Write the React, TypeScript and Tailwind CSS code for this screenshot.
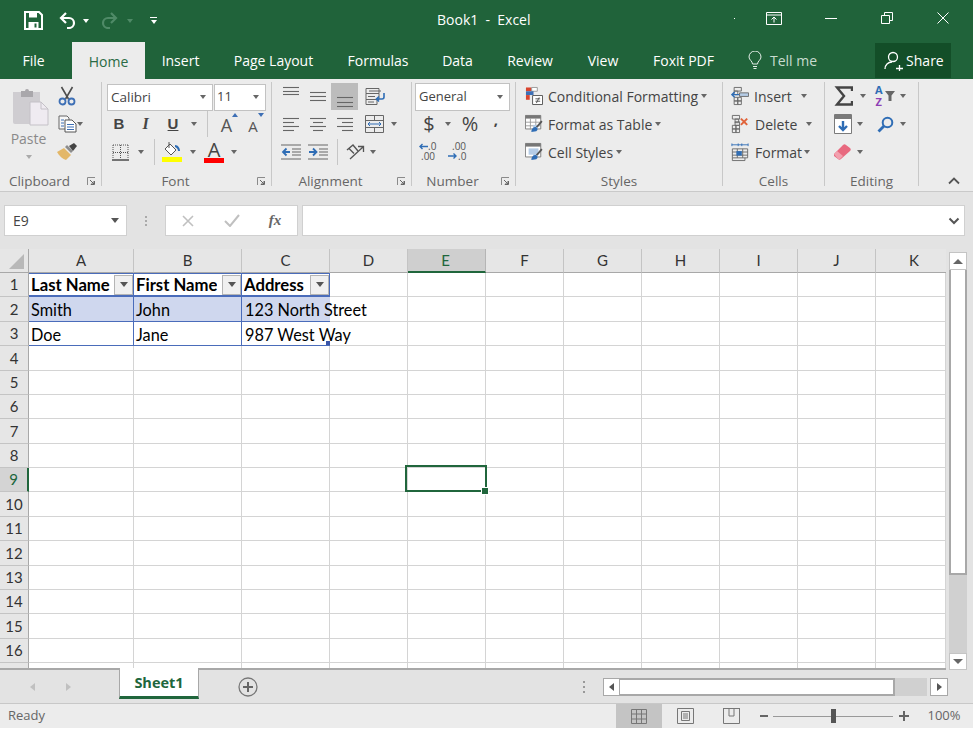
import * as React from 'react';

const COLUMNS = ['A', 'B', 'C', 'D', 'E', 'F', 'G', 'H', 'I', 'J', 'K'];
const ROWS = Array.from({ length: 16 }, (_, i) => i + 1);

const TABLE: Record<string, string> = {
  'A-2': 'Smith',
  'B-2': 'John',
  'C-2': '123 North Street',
  'A-3': 'Doe',
  'B-3': 'Jane',
  'C-3': '987 West Way',
};

const HEADERS = ['Last Name', 'First Name', 'Address'];

function Caret({ dark = false }: { dark?: boolean }) {
  return (
    <span
      className={
        dark
          ? 'inline-block h-0 w-0 border-x-[4px] border-t-[5px] border-x-transparent border-t-[#555555]'
          : 'inline-block h-0 w-0 border-x-[3px] border-t-[4px] border-x-transparent border-t-[#666666]'
      }
    />
  );
}

function Slot({ className, children }: { className: string; children?: React.ReactNode }) {
  return <div className={`flex h-full items-center justify-center ${className}`}>{children}</div>;
}

function VSep({ className }: { className: string }) {
  return (
    <Slot className={className}>
      <span className="h-[26px] w-px bg-[#c6c6c6]" />
    </Slot>
  );
}

function Launcher() {
  return (
    <svg width="9" height="9" viewBox="0 0 9 9" fill="none">
      <path d="M.5 8V.5H8" stroke="#8a8a8a" />
      <path d="M3 3l4 4M7.5 4v3.5H4z" stroke="#666666" />
    </svg>
  );
}

function Group({
  label,
  launcher,
  className,
  pad = '',
  children,
}: {
  label: string;
  launcher?: boolean;
  className: string;
  pad?: string;
  children: React.ReactNode;
}) {
  return (
    <section className={`flex h-full flex-col border-r border-[#c8c8c8] ${className}`}>
      <div className={`h-[84px] ${pad}`}>{children}</div>
      <div className="flex flex-1 items-center pt-[9px] text-[13.5px] leading-none text-[#666666]">
        <span className="flex-1 text-center">{label}</span>
        {launcher && (
          <span className="flex w-[22px] pl-[8px]">
            <Launcher />
          </span>
        )}
      </div>
    </section>
  );
}

function Row({ className = '', children }: { className?: string; children: React.ReactNode }) {
  return <div className={`flex h-[28px] items-center ${className}`}>{children}</div>;
}

function SaveIcon() {
  return (
    <svg width="19" height="19" viewBox="0 0 19 19" fill="none">
      <path d="M1 1h14l3 3v14H1z" stroke="#fff" strokeWidth="2" />
      <path d="M5 1.500h8v5H5z" fill="#fff" />
      <path d="M4.500 11h10v6h-10z" fill="#fff" />
      <path d="M10.500 12.500h2v4h-2z" fill="#20633a" />
    </svg>
  );
}

function UndoIcon({ color, flip = false }: { color: string; flip?: boolean }) {
  return (
    <svg width="18" height="17" viewBox="0 0 18 17" fill="none" className={flip ? '-scale-x-100' : ''}>
      <path
        d="M7 1L2 6l5 5M2.500 6H10a5 5 0 0 1 5 5 5 5 0 0 1-5 5H8"
        stroke={color}
        strokeWidth="2.200"
      />
    </svg>
  );
}

function ClipboardIcon() {
  return (
    <svg width="37" height="38" viewBox="0 0 37 38">
      <path d="M1 4h27v32H3a2 2 0 0 1-2-2z" fill="#cfcdd1" />
      <path d="M9 3h4a2 2 0 0 1 4 0h4v6H9z" fill="#a9a7ab" />
      <path d="M18 14h11l7 7v16H18z" fill="#efebf1" stroke="#c4c1c7" />
      <path d="M29 14v7h7" fill="none" stroke="#c4c1c7" />
    </svg>
  );
}

function ScissorsIcon() {
  return (
    <svg width="18" height="20" viewBox="0 0 18 20" fill="none">
      <path d="M3.500 1l7 12M14.500 1l-7 12" stroke="#4d4d4d" strokeWidth="1.600" />
      <circle cx="4.500" cy="15.500" r="3" stroke="#3d6fb5" strokeWidth="1.800" />
      <circle cx="13.500" cy="15.500" r="3" stroke="#3d6fb5" strokeWidth="1.800" />
    </svg>
  );
}

function CopyIcon() {
  return (
    <svg width="19" height="18" viewBox="0 0 19 18" fill="none">
      <path d="M1 1h8l2 2v11H1z" fill="#f7f7f7" stroke="#666666" />
      <path d="M7 5h7l4 4v8H7z" fill="#fff" stroke="#555555" />
      <path d="M3 5h3M3 8h3M3 11h3M9 9.500h7M9 12h7M9 14.500h7" stroke="#3d6fb5" />
    </svg>
  );
}

function BrushIcon() {
  return (
    <svg width="20" height="18" viewBox="0 0 20 18">
      <path d="M0 9l7-4 7 7-5 5C6 16 2 13 0 9z" fill="#e3b768" />
      <path d="M8 4l2-2 6 6-2 2z" fill="#8d8d8d" />
      <path d="M12 3l5-3 3 3-4 5z" fill="#444444" />
    </svg>
  );
}

function BordersIcon() {
  return (
    <svg width="17" height="17" viewBox="0 0 17 17" fill="none">
      <path d="M1 1h15M1 8.500h15M1 1v14M8.500 1v14M16 1v14" stroke="#555555" strokeDasharray="1 1" />
      <path d="M0 16h17" stroke="#555555" strokeWidth="1.600" />
    </svg>
  );
}

function FillIcon() {
  return (
    <div className="flex flex-col items-center">
      <svg width="20" height="14" viewBox="0 0 20 14" fill="none">
        <path d="M3 7l5-5 6 6-5 5z" fill="#fff" stroke="#555555" />
        <path d="M7 0v6" stroke="#555555" />
        <path d="M13 3c3 0 5 3 5 6l-2 0c0-2-1-3-3-4z" fill="#2f6db5" />
      </svg>
      <span className="mt-px h-[5px] w-[20px] bg-[#ffff00]" />
    </div>
  );
}

function LetterA() {
  return (
    <div className="flex flex-col items-center">
      <span className="h-[15px] text-[20px] leading-[15px] font-medium text-[#444444]">A</span>
      <span className="mt-px h-[5px] w-[20px] bg-[#ff0000]" />
    </div>
  );
}

function GrowA({ shrink = false }: { shrink?: boolean }) {
  return (
    <span className="relative flex h-[22px] w-[22px] items-end justify-center">
      <span className={shrink ? 'text-[15px] leading-[18px] text-[#555555]' : 'text-[18px] leading-[20px] text-[#555555]'}>A</span>
      <span
        className={
          shrink
            ? 'absolute top-0 right-0 h-0 w-0 border-x-[3px] border-t-[4px] border-x-transparent border-t-[#3d6fb5]'
            : 'absolute top-0 right-0 h-0 w-0 border-x-[3px] border-b-[4px] border-x-transparent border-b-[#3d6fb5]'
        }
      />
    </span>
  );
}

function Lines({ lines, tall = false }: { lines: [number, number, number][]; tall?: boolean }) {
  const h = tall ? 24 : 16;
  return (
    <svg width="18" height={h} viewBox={`0 0 18 ${h}`} fill="none">
      {lines.map(([x1, y, x2], i) => (
        <path key={i} d={`M${x1} ${y}H${x2}`} stroke="#666666" strokeWidth="1.100" />
      ))}
    </svg>
  );
}

const L_TOP: [number, number, number][] = [[1, 2.5, 17], [1, 6.5, 17], [1, 9.5, 17]];
const L_MID: [number, number, number][] = [[1, 7.5, 17], [1, 11.5, 17], [1, 15.5, 17]];
const L_BOT: [number, number, number][] = [[1, 12.5, 17], [1, 17.5, 17], [1, 21.5, 17]];
const L_LEFT: [number, number, number][] = [[1, 2.5, 17], [1, 6.5, 12], [1, 10.5, 17], [1, 14.5, 12]];
const L_CENTER: [number, number, number][] = [[1, 2.5, 17], [4, 6.5, 14], [1, 10.5, 17], [4, 14.5, 14]];
const L_RIGHT: [number, number, number][] = [[1, 2.5, 17], [6, 6.5, 17], [1, 10.5, 17], [6, 14.5, 17]];

function WrapIcon() {
  return (
    <svg width="21" height="20" viewBox="0 0 21 20" fill="none">
      <path d="M1 1.500h13v5H1zM1 6.500h13v6H1zM1 12.500h11v5H1z" stroke="#666666" />
      <path d="M4 4h12M3 9.500h7M3 15h6" stroke="#666666" />
      <path d="M19 6v4a2 2 0 0 1-2 2h-5M14 9.500L11.500 12l2.500 2.500" stroke="#2f6db5" strokeWidth="1.600" />
    </svg>
  );
}

function MergeIcon() {
  return (
    <svg width="19" height="18" viewBox="0 0 19 18" fill="none">
      <path d="M.5.500h18v17H.5zM.5 5.500h18M.5 12.500h18M9.500.5v5M9.500 12.500v5" stroke="#666666" />
      <path d="M3 9h13" stroke="#2f6db5" />
      <path d="M5 7L3 9l2 2M14 7l2 2-2 2" stroke="#2f6db5" />
    </svg>
  );
}

function IndentIcon({ forward = false }: { forward?: boolean }) {
  return (
    <svg width="20" height="16" viewBox="0 0 20 16" fill="none">
      <path d="M0 1h20M11 5h9M11 8h9M11 11h9M0 15h20" stroke="#666666" />
      <path d={forward ? 'M1 8h7M5 4.500L8.500 8 5 11.500' : 'M9 8H2M5.500 4.500L2 8l3.500 3.500'} stroke="#2f6db5" strokeWidth="1.800" />
    </svg>
  );
}

function OrientIcon() {
  return (
    <svg width="20" height="18" viewBox="0 0 20 18" fill="none">
      <path d="M2 7l6-5 5 6M4 5.500l5 5" stroke="#555555" strokeWidth="1.400" />
      <path d="M5 16L18 4M13 3.500h5.500V9" stroke="#555555" strokeWidth="1.300" />
    </svg>
  );
}

function DecimalIcon({ more = false }: { more?: boolean }) {
  return (
    <svg width="21" height="20" viewBox="0 0 21 20" fill="none" className="overflow-visible">
      <text x={more ? 5 : 9} y="8" fontSize="10" fill="#555555" fontFamily="'Open Sans', sans-serif">{more ? '.00' : '.0'}</text>
      <text x={more ? 11 : 2} y="18" fontSize="10" fill="#555555" fontFamily="'Open Sans', sans-serif">{more ? '.0' : '.00'}</text>
      <path
        d={more ? 'M1 14h8M6.500 11.500L9 14l-2.500 2.500' : 'M9 4.500H1M3.500 2L1 4.500 3.500 7'}
        stroke="#2f6db5"
        strokeWidth="1.400"
      />
    </svg>
  );
}

function ConditionalIcon() {
  return (
    <svg width="19" height="20" viewBox="0 0 19 20" fill="none">
      <path d="M1 1h6v4H1z" fill="#d9452f" />
      <path d="M7 1h6v4H7z" fill="#fff" stroke="#999999" />
      <path d="M1 5h8v4H1z" fill="#3d6fb5" />
      <path d="M1 9h4v5H1z" fill="#d9452f" />
      <path d="M8 9.500h10.500v9.500H8z" fill="#fff" stroke="#555555" />
      <path d="M11 13h5M11 15.500h5M15 11.500l-3 6" stroke="#555555" />
    </svg>
  );
}

function TableBrushIcon({ full = true }: { full?: boolean }) {
  return (
    <svg width="20" height="20" viewBox="0 0 20 20" fill="none">
      <path d="M.5.500h17v15H.500z" fill="#fff" stroke="#777777" />
      <path d="M.5.500h17v3.500H.500z" fill="#777777" />
      {full ? (
        <path d="M6 4v12M12 4v12M1 8h16M1 12h16" stroke="#9a9a9a" />
      ) : (
        <path d="M4 6h11v7H4z" fill="#b5cce6" />
      )}
      <path d="M9 11h5v5H9z" fill="#b5cce6" />
      <path d="M12 13l6-7 1.500 1.500L14 14z" fill="#555555" />
      <path d="M7 19c0-4 3-6 5.500-5.500 2 .5 2 3 0 4.500z" fill="#2f6db5" />
    </svg>
  );
}

function InsertCellsIcon() {
  return (
    <svg width="20" height="20" viewBox="0 0 20 20" fill="none">
      <path d="M3.500.500h8v4h-8zM3.500 4.500h4v4h-4zM3.500 11.500h4v4h-4zM7.500 11.500h4v4h-4zM3.500 15.500h4v4h-4zM7.500 15.500h4v4h-4z" stroke="#666666" />
      <path d="M9.500 6.500h10v4h-10z" fill="#b5cce6" stroke="#666666" />
      <path d="M9 8.500H1M4 5.500L1 8.500l3 3" stroke="#2f6db5" strokeWidth="1.600" />
    </svg>
  );
}

function DeleteCellsIcon() {
  return (
    <svg width="20" height="20" viewBox="0 0 20 20" fill="none">
      <path d="M1.500.500h8v4h-8zM4.500 4.500h4v4h-4zM4.500 7.500h5v4h-5zM1.500 11.500h4v4h-4zM5.500 11.500h4v4h-4zM1.500 15.500h4v4h-4zM5.500 15.500h4v4h-4z" stroke="#666666" />
      <path d="M11 4l7 7M18 4l-7 7" stroke="#e0633a" strokeWidth="2.200" />
    </svg>
  );
}

function FormatCellsIcon() {
  return (
    <svg width="20" height="20" viewBox="0 0 20 20" fill="none">
      <path d="M1 2h18M1 .5v3M8 .5v3M12 .5v3M19 .5v3" stroke="#2f6db5" />
      <path d="M1.500 6.500h17v10h-17zM1.500 16.500v3h14v-3M7 6.500v10M13 6.500v10M1.500 10h17M1.500 13.500h17" stroke="#666666" />
      <path d="M6 9h6v5H6z" fill="#2f6db5" />
    </svg>
  );
}

function SigmaIcon() {
  return (
    <svg width="19" height="20" viewBox="0 0 19 20" fill="none">
      <path d="M18 5V1.500H3L10 10l-7 8.500h15V15" stroke="#444444" strokeWidth="2.400" />
    </svg>
  );
}

function FillDownIcon() {
  return (
    <svg width="18" height="20" viewBox="0 0 18 20" fill="none">
      <path d="M.5.500h17v19H.500z" fill="#fff" stroke="#7a7a7a" />
      <path d="M1 1h16v4H1z" fill="#7a7a7a" />
      <path d="M9 7v9M5 12l4 4 4-4" stroke="#2f6db5" strokeWidth="2.400" />
    </svg>
  );
}

function SortIcon() {
  return (
    <div className="flex items-center">
      <div className="flex flex-col items-center text-[11px] leading-[12px] font-bold">
        <span className="block text-[#2f6db5]">A</span>
        <span className="block text-[#8e3fb5]">Z</span>
      </div>
      <svg width="10" height="10" viewBox="0 0 10 10" className="ml-[2px]">
        <path d="M0 0h10L6.500 4.500V10h-3V4.500z" fill="#666666" />
      </svg>
    </div>
  );
}

function FindIcon() {
  return (
    <svg width="17" height="17" viewBox="0 0 17 17" fill="none">
      <circle cx="10.500" cy="6.500" r="4.800" stroke="#2f6db5" strokeWidth="2" />
      <path d="M7 10l-5.500 5.500" stroke="#2f6db5" strokeWidth="2.800" />
    </svg>
  );
}

function EraserIcon() {
  return (
    <svg width="18" height="16" viewBox="0 0 18 16">
      <path d="M0 10l9-9c1-1 2-1 3 0l4 3c1 1 1 2 0 3l-9 8c-1 1-2 1-3 0l-4-3z" fill="#e8697f" />
      <path d="M0 10l3-3 6 5-3 3c-1 .5-1.500.5-2 0z" fill="#f2a0ae" />
    </svg>
  );
}

function Ribbon() {
  return (
    <div className="flex h-[113px] border-b border-[#c9c9c9] bg-[#ececec] pt-[3px] pb-[5px] text-[14px] text-[#444444]">
      {/* Clipboard */}
      <Group label="Clipboard" launcher className="w-[102px]">
        <div className="flex h-full">
          <div className="flex w-[57px] flex-col items-center pt-[6px] text-[#8a8a8a]">
            <span className="ml-[3px]">
              <ClipboardIcon />
            </span>
            <span className="mt-[3px] text-[14px] leading-[19px]">Paste</span>
            <span className="mt-[7px] inline-block h-0 w-0 border-x-[3px] border-t-[4px] border-x-transparent border-t-[#aaaaaa]" />
          </div>
          <div>
            <Row>
              <Slot className="w-[20px]">
                <ScissorsIcon />
              </Slot>
            </Row>
            <Row>
              <Slot className="w-[20px]">
                <CopyIcon />
              </Slot>
              <Caret />
            </Row>
            <Row>
              <Slot className="w-[20px]">
                <BrushIcon />
              </Slot>
            </Row>
          </div>
        </div>
      </Group>

      {/* Font */}
      <Group label="Font" launcher className="w-[170px]" pad="pl-[5px]">
        <Row className="gap-px pt-[2px]">
          <div className="flex h-[27px] w-[106px] items-center justify-between border border-[#c2c2c2] bg-white pr-[6px] pl-[3px]">
            <span className="text-[13.5px]">Calibri</span>
            <Caret />
          </div>
          <div className="flex h-[27px] w-[52px] items-center justify-between border border-[#c2c2c2] bg-white pr-[6px] pl-[2px]">
            <span className="text-[13px]">11</span>
            <Caret />
          </div>
        </Row>
        <Row>
          <Slot className="w-[24px] font-['Liberation_Sans',sans-serif] text-[15px] font-bold text-[#444444]">B</Slot>
          <Slot className="w-[29px] font-['Liberation_Serif',serif] text-[16px] font-bold text-[#444444] italic">I</Slot>
          <Slot className="w-[26px] font-['Liberation_Sans',sans-serif] text-[15px] font-bold text-[#444444] underline">U</Slot>
          <Slot className="w-[15px]">
            <Caret />
          </Slot>
          <VSep className="w-[12px]" />
          <Slot className="w-[27px]">
            <GrowA />
          </Slot>
          <Slot className="w-[26px]">
            <GrowA shrink />
          </Slot>
        </Row>
        <Row>
          <Slot className="w-[26px]">
            <BordersIcon />
          </Slot>
          <Slot className="w-[16px]">
            <Caret />
          </Slot>
          <VSep className="w-[10px]" />
          <Slot className="w-[26px]">
            <FillIcon />
          </Slot>
          <Slot className="w-[16px]">
            <Caret />
          </Slot>
          <Slot className="w-[26px]">
            <LetterA />
          </Slot>
          <Slot className="w-[14px]">
            <Caret />
          </Slot>
        </Row>
      </Group>

      {/* Alignment */}
      <Group label="Alignment" launcher className="w-[140px]" pad="pl-[5px]">
        <Row className="pt-px">
          <Slot className="w-[27px]">
            <Lines lines={L_TOP} tall />
          </Slot>
          <Slot className="w-[27px]">
            <Lines lines={L_MID} tall />
          </Slot>
          <Slot className="w-[27px] bg-[#bcbcbc]">
            <Lines lines={L_BOT} tall />
          </Slot>
          <Slot className="w-[34px]">
            <WrapIcon />
          </Slot>
        </Row>
        <Row>
          <Slot className="w-[27px]">
            <Lines lines={L_LEFT} />
          </Slot>
          <Slot className="w-[27px]">
            <Lines lines={L_CENTER} />
          </Slot>
          <Slot className="w-[27px]">
            <Lines lines={L_RIGHT} />
          </Slot>
          <Slot className="w-[32px]">
            <MergeIcon />
          </Slot>
          <Slot className="w-[8px]">
            <Caret />
          </Slot>
        </Row>
        <Row>
          <Slot className="w-[27px]">
            <IndentIcon />
          </Slot>
          <Slot className="w-[27px]">
            <IndentIcon forward />
          </Slot>
          <VSep className="w-[12px]" />
          <Slot className="w-[24px]">
            <OrientIcon />
          </Slot>
          <Slot className="w-[12px]">
            <Caret />
          </Slot>
        </Row>
      </Group>

      {/* Number */}
      <Group label="Number" launcher className="w-[104px]" pad="pl-[3px]">
        <Row className="pt-[2px]">
          <div className="flex h-[28px] w-[95px] items-center justify-between border border-[#c2c2c2] bg-white pr-[6px] pl-[3px]">
            <span className="text-[13px]">General</span>
            <Caret />
          </div>
        </Row>
        <Row>
          <Slot className="w-[28px] text-[20px]">$</Slot>
          <Slot className="w-[10px]">
            <Caret />
          </Slot>
          <Slot className="w-[34px] text-[20px]">%</Slot>
          <Slot className="w-[18px] pb-[10px] text-[15px] font-bold">,</Slot>
        </Row>
        <Row>
          <Slot className="w-[28px]">
            <DecimalIcon />
          </Slot>
          <Slot className="w-[28px]">
            <DecimalIcon more />
          </Slot>
        </Row>
      </Group>

      {/* Styles */}
      <Group label="Styles" className="w-[207px]" pad="pl-[9px]">
        <Row>
          <Slot className="w-[18px]">
            <ConditionalIcon />
          </Slot>
          <span className="ml-[5px] whitespace-nowrap">Conditional Formatting</span>
          <span className="ml-[3px] flex">
            <Caret />
          </span>
        </Row>
        <Row>
          <Slot className="w-[18px]">
            <TableBrushIcon />
          </Slot>
          <span className="ml-[5px] whitespace-nowrap">Format as Table</span>
          <span className="ml-[3px] flex">
            <Caret />
          </span>
        </Row>
        <Row>
          <Slot className="w-[18px]">
            <TableBrushIcon full={false} />
          </Slot>
          <span className="ml-[5px] whitespace-nowrap">Cell Styles</span>
          <span className="ml-[3px] flex">
            <Caret />
          </span>
        </Row>
      </Group>

      {/* Cells */}
      <Group label="Cells" className="w-[102px]" pad="pl-[8px]">
        <Row>
          <Slot className="w-[18px]">
            <InsertCellsIcon />
          </Slot>
          <span className="ml-[5px] w-[36px]">Insert</span>
          <span className="ml-[11px] flex">
            <Caret />
          </span>
        </Row>
        <Row>
          <Slot className="w-[18px]">
            <DeleteCellsIcon />
          </Slot>
          <span className="ml-[6px] w-[41px]">Delete</span>
          <span className="ml-[10px] flex">
            <Caret />
          </span>
        </Row>
        <Row>
          <Slot className="w-[18px]">
            <FormatCellsIcon />
          </Slot>
          <span className="ml-[6px] w-[48px]">Format</span>
          <span className="ml-[1px] flex">
            <Caret />
          </span>
        </Row>
      </Group>

      {/* Editing */}
      <Group label="Editing" className="w-[94px]" pad="pl-[8px]">
        <Row>
          <Slot className="w-[20px]">
            <SigmaIcon />
          </Slot>
          <Slot className="w-[20px]">
            <Caret />
          </Slot>
          <div className="flex w-[19px] pl-[2px]">
            <SortIcon />
          </div>
          <Slot className="w-[22px]">
            <Caret />
          </Slot>
        </Row>
        <Row>
          <Slot className="w-[20px]">
            <FillDownIcon />
          </Slot>
          <Slot className="w-[14px]">
            <Caret />
          </Slot>
          <Slot className="ml-[7px] w-[22px]">
            <FindIcon />
          </Slot>
          <Slot className="w-[14px]">
            <Caret />
          </Slot>
        </Row>
        <Row>
          <Slot className="w-[20px]">
            <EraserIcon />
          </Slot>
          <Slot className="w-[14px]">
            <Caret />
          </Slot>
        </Row>
      </Group>

      <div className="flex flex-1 items-end justify-center pr-[1px] pb-[1px] pl-[16px]">
        <svg width="12" height="8" viewBox="0 0 12 8" fill="none">
          <path d="M1 6.500l5-5 5 5" stroke="#555555" strokeWidth="1.800" />
        </svg>
      </div>
    </div>
  );
}

function TitleBar() {
  return (
    <div className="flex h-[42px] items-center pb-px text-white">
      <div className="flex w-[160px] items-center pl-[24px]">
        <SaveIcon />
        <span className="ml-[16px] flex">
          <UndoIcon color="#ffffff" />
        </span>
        <span className="ml-[6px] inline-block h-0 w-0 border-x-[3px] border-t-[4px] border-x-transparent border-t-white" />
      </div>
      <div className="-ml-[60px] flex items-center">
        <UndoIcon color="#4f8a67" flip />
        <span className="ml-[9px] inline-block h-0 w-0 border-x-[3px] border-t-[4px] border-x-transparent border-t-[#4f8a67]" />
        <div className="ml-[17px] flex flex-col items-center gap-[2px]">
          <span className="h-px w-[7px] bg-white" />
          <span className="inline-block h-0 w-0 border-x-[3.5px] border-t-[4px] border-x-transparent border-t-white" />
        </div>
      </div>
      <div className="ml-[280px] pb-[2px] text-[14px] whitespace-pre">Book1  -  Excel</div>
      <div className="ml-auto flex h-full items-center pb-[5px]">
        <span className="mr-[12px] h-px w-px bg-white" />
        <Slot className="w-[54px]">
          <svg width="16" height="13" viewBox="0 0 16 13" fill="none">
            <path d="M.5.500h15v12H.500zM.5 3h15" stroke="#fff" />
            <path d="M8 10.500V5M5.500 7.500L8 5l2.500 2.500" stroke="#fff" />
          </svg>
        </Slot>
        <Slot className="w-[60px]">
          <span className="h-px w-[12px] bg-white" />
        </Slot>
        <Slot className="w-[52px]">
          <svg width="12" height="12" viewBox="0 0 12 12" fill="none">
            <path d="M.5 3.500h8v8h-8zM3.500 3V.5h8v8H9" stroke="#fff" />
          </svg>
        </Slot>
        <Slot className="w-[60px]">
          <svg width="12" height="12" viewBox="0 0 12 12" fill="none">
            <path d="M.5.500l11 11M11.500.5l-11 11" stroke="#fff" />
          </svg>
        </Slot>
      </div>
    </div>
  );
}

function TabBar() {
  return (
    <div className="flex h-[37px] items-center text-[14px] text-white">
      <Slot className="w-[72px] pr-[5px]">File</Slot>
      <Slot className="w-[73px] bg-[#ececec] pt-px text-[#2a6b45]">Home</Slot>
      <Slot className="w-[71px]">Insert</Slot>
      <Slot className="w-[115px]">Page Layout</Slot>
      <Slot className="w-[94px]">Formulas</Slot>
      <Slot className="w-[65px]">Data</Slot>
      <Slot className="w-[80px]">Review</Slot>
      <Slot className="w-[66px]">View</Slot>
      <Slot className="w-[95px]">Foxit PDF</Slot>
      <div className="ml-[17px] flex items-center text-[#c8dccf]">
        <svg width="14" height="19" viewBox="0 0 14 19" fill="none">
          <path d="M4.500 13C4.500 10 1 9 1 6a6 6 0 0 1 12 0c0 3-3.500 4-3.500 7z" stroke="#e4eee8" />
          <path d="M5 15.500h4M5.500 17.500h3" stroke="#e4eee8" />
        </svg>
        <span className="ml-[8px]">Tell me</span>
      </div>
      <div className="ml-[58px] flex h-[35px] w-[76px] items-center bg-[#134e28] pl-[9px]">
        <svg width="19" height="20" viewBox="0 0 19 20" fill="none">
          <circle cx="9" cy="6" r="4.500" stroke="#fff" strokeWidth="1.300" />
          <path d="M1 18c0-4 3-7 7-7M12 17.500h7M15.500 14v7" stroke="#fff" strokeWidth="1.300" />
        </svg>
        <span className="ml-[3px]">Share</span>
      </div>
    </div>
  );
}

function FormulaBar() {
  return (
    <div className="flex h-[57px] bg-[#e3e3e3] pt-[13px] pb-[13px] pl-[4px] text-[14px] text-[#444444]">
      <div className="flex w-[123px] items-center justify-between border border-[#d0d0d0] bg-white pr-[7px] pl-[8px]">
        <span>E9</span>
        <Caret dark />
      </div>
      <div className="flex w-[38px] flex-col items-center justify-center gap-[2px]">
        <span className="h-[2px] w-[2px] bg-[#aaaaaa]" />
        <span className="h-[2px] w-[2px] bg-[#aaaaaa]" />
        <span className="h-[2px] w-[2px] bg-[#aaaaaa]" />
      </div>
      <div className="flex w-[133px] items-center border border-[#d0d0d0] bg-white">
        <Slot className="w-[43px]">
          <svg width="12" height="12" viewBox="0 0 12 12" fill="none">
            <path d="M1 1l10 10M11 1L1 11" stroke="#c0c0c0" strokeWidth="1.600" />
          </svg>
        </Slot>
        <Slot className="w-[46px]">
          <svg width="16" height="13" viewBox="0 0 16 13" fill="none">
            <path d="M1 7l5 5L15 1" stroke="#c0c0c0" strokeWidth="2" />
          </svg>
        </Slot>
        <Slot className="w-[40px] font-['Liberation_Serif',serif] text-[15px] font-bold text-[#666666] italic">fx</Slot>
      </div>
      <div className="ml-[4px] flex w-[663px] items-center justify-end border border-[#d0d0d0] bg-white pr-[4px]">
        <svg width="12" height="8" viewBox="0 0 12 8" fill="none">
          <path d="M1.500 1.500L6 6l4.500-4.500" stroke="#555555" strokeWidth="2" />
        </svg>
      </div>
    </div>
  );
}

function HeaderCell({ label }: { label: string }) {
  return (
    <div className="flex min-w-0 items-center justify-between border-t border-r border-b-2 border-t-[#4a6cba] border-r-[#4a6cba] border-b-[#4a6cba] pl-[2px]">
      <span className="truncate pt-[2px] text-[16.7px] font-bold text-black">{label}</span>
      <span className="flex h-[20px] w-[19px] shrink-0 items-center justify-center border border-[#b5b5b5] bg-[#f0f0f0]">
        <Caret dark />
      </span>
    </div>
  );
}

function SheetCell({ row, col }: { row: number; col: number }) {
  const id = `${COLUMNS[col]}-${row}`;
  const text = TABLE[id];

  if (row === 1 && col < 3) return <HeaderCell label={HEADERS[col]} />;

  if (row === 2 || row === 3) {
    if (col < 2) {
      return (
        <div
          className={
            row === 2
              ? 'border-r border-b border-r-[#4a6cba] border-b-[#4a6cba] bg-[#cfd7ee] pl-[2px] text-[16.3px] leading-[25px] text-black'
              : 'border-r border-b border-r-[#4a6cba] border-b-[#4a6cba] pl-[2px] text-[16.3px] leading-[25px] text-black'
          }
        >
          {text}
        </div>
      );
    }
    if (col === 2) {
      return (
        <div
          className={
            row === 2
              ? 'border-b border-b-[#4a6cba] bg-[#cfd7ee] pl-[3px] text-[16.3px] leading-[25px] whitespace-nowrap text-black'
              : 'relative border-b border-b-[#4a6cba] pl-[3px] text-[16.3px] leading-[25px] whitespace-nowrap text-black'
          }
        >
          {text}
          {row === 3 && <span className="absolute right-0 bottom-0 h-[4px] w-[4px] bg-[#3a55a8]" />}
        </div>
      );
    }
  }

  if (row === 9 && col === 4) {
    return (
      <div className="relative border-r border-b border-[#d4d4d4]">
        <span className="absolute -top-[3px] -right-[2px] -bottom-[1px] -left-[3px] z-10 border-2 border-[#20663c]" />
        <span className="absolute -right-[3px] -bottom-[3px] z-20 h-[6px] w-[6px] bg-[#20663c] outline outline-white" />
      </div>
    );
  }

  return <div className="border-r border-b border-[#d4d4d4]" />;
}

function ColumnHeader({ label }: { label: string }) {
  if (label === 'E') {
    return (
      <div className="flex items-center justify-center border-r border-b-2 border-r-[#b5b5b5] border-b-[#20663c] bg-[#cfcfcf] pr-[2px] text-[15px] text-[#20663c]">
        {label}
      </div>
    );
  }
  return (
    <div
      className={
        label === 'K'
          ? 'flex items-center justify-center border-b border-b-[#a8a8a8] bg-[#e6e6e6] pl-[6px] text-[15px] text-[#333333]'
          : 'flex items-center justify-center border-r border-b border-r-[#c4c4c4] border-b-[#a8a8a8] bg-[#e6e6e6] text-[15px] text-[#333333]'
      }
    >
      {label}
    </div>
  );
}

function Sheet() {
  return (
    <div className="flex h-[421px] bg-[#e3e3e3]">
      <div className="grid h-full w-[946px] grid-cols-[29px_105px_108px_88px_78px_78px_78px_78px_78px_78px_78px_70px] grid-rows-[24px_repeat(16,24.375px)_1fr] border-b-2 border-[#a8a8a8] bg-white font-['Lato',sans-serif]">
        <div className="flex items-end justify-end border-r border-b border-[#a8a8a8] bg-[#e6e6e6] pr-[4px] pb-[3px]">
          <span className="h-0 w-0 border-b-[15px] border-l-[15px] border-b-[#b8b8b8] border-l-transparent" />
        </div>
        {COLUMNS.map((c) => (
          <ColumnHeader key={c} label={c} />
        ))}
        {ROWS.map((r) => (
          <React.Fragment key={r}>
            <div
              className={
                r === 9
                  ? 'flex items-center justify-center border-r-2 border-b border-r-[#20663c] border-b-[#c4c4c4] bg-[#d4d4d4] text-[15px] text-[#20663c]'
                  : 'flex items-center justify-center border-r border-b border-r-[#a8a8a8] border-b-[#c4c4c4] bg-[#e6e6e6] text-[15px] text-[#333333]'
              }
            >
              {r}
            </div>
            {COLUMNS.map((_, i) => (
              <SheetCell key={i} row={r} col={i} />
            ))}
          </React.Fragment>
        ))}
        <div className="border-r border-[#a8a8a8] bg-[#e6e6e6]" />
        {COLUMNS.map((c) => (
          <div key={c} className="border-r border-[#d4d4d4]" />
        ))}
      </div>
      <div className="ml-[3px] flex w-[18px] flex-col pt-[3px]">
        <div className="flex h-[18px] items-center justify-center border border-[#c4c4c4] bg-white">
          <span className="h-0 w-0 border-x-[5px] border-b-[5px] border-x-transparent border-b-[#666666]" />
        </div>
        <div className="h-[305px] border-2 border-t-0 border-[#a8a8a8] bg-white" />
        <div className="flex-1 bg-[#d0d0d0]" />
        <div className="flex h-[17px] items-center justify-center border border-[#c4c4c4] bg-white">
          <span className="h-0 w-0 border-x-[5px] border-t-[5px] border-x-transparent border-t-[#666666]" />
        </div>
      </div>
    </div>
  );
}

function SheetTabs() {
  return (
    <div className="flex h-[34px] border-b border-[#c8c8c8] bg-[#e3e3e3]">
      <div className="flex w-[119px] items-center pl-[30px]">
        <span className="h-0 w-0 border-y-[4px] border-r-[5px] border-y-transparent border-r-[#c0c0c0]" />
        <span className="ml-[31px] h-0 w-0 border-y-[4px] border-l-[5px] border-y-transparent border-l-[#c0c0c0]" />
      </div>
      <div className="relative -mt-[2px] flex h-[31px] w-[80px] items-center justify-center border-x border-b-[3px] border-x-[#a8a8a8] border-b-[#20663c] bg-white pt-[2px] font-['Open_Sans',sans-serif] text-[14.5px] font-bold text-[#20663c]">
        Sheet1
      </div>
      <div className="ml-[39px] flex items-center">
        <svg width="20" height="20" viewBox="0 0 20 20" fill="none">
          <circle cx="10" cy="10" r="9" stroke="#777777" strokeWidth="1.300" />
          <path d="M5 10h10M10 5v10" stroke="#666666" strokeWidth="2" />
        </svg>
      </div>
      <div className="ml-[325px] flex flex-col items-center justify-center gap-[3px]">
        <span className="h-[2px] w-[2px] bg-[#999999]" />
        <span className="h-[2px] w-[2px] bg-[#999999]" />
        <span className="h-[2px] w-[2px] bg-[#999999]" />
      </div>
      <div className="ml-[18px] flex h-[18px] self-center">
        <div className="flex w-[17px] items-center justify-center border border-[#a8a8a8] bg-white">
          <span className="h-0 w-0 border-y-[4px] border-r-[5px] border-y-transparent border-r-[#555555]" />
        </div>
        <div className="w-[275px] border-2 border-l-0 border-[#a8a8a8] bg-white" />
        <div className="w-[32px] bg-[#d0d0d0]" />
        <div className="ml-[3px] flex w-[18px] items-center justify-center border border-[#a8a8a8] bg-white">
          <span className="h-0 w-0 border-y-[4px] border-l-[5px] border-y-transparent border-l-[#555555]" />
        </div>
      </div>
    </div>
  );
}

function StatusBar() {
  return (
    <div className="flex flex-1 items-center bg-[#ececec] text-[13px] text-[#666666]">
      <div className="flex-1 pl-[8px]">Ready</div>
      <Slot className="w-[46px] bg-[#c4c4c4]">
        <svg width="16" height="15" viewBox="0 0 16 15" fill="none">
          <path d="M.5.500h15v14H.500zM5.500.5v14M10.500.5v14M.5 5h15M.5 10h15" stroke="#777777" />
        </svg>
      </Slot>
      <Slot className="w-[46px]">
        <svg width="17" height="16" viewBox="0 0 17 16" fill="none">
          <path d="M.5.500h16v15H.500z" stroke="#777777" />
          <path d="M4.500 3.500h8v9h-8zM6 6h5M6 8h5M6 10h5" stroke="#777777" />
        </svg>
      </Slot>
      <Slot className="w-[46px]">
        <svg width="17" height="16" viewBox="0 0 17 16" fill="none">
          <path d="M.5 0v15.500h16V0M.5.500h16M6 .5V8h5V.5" stroke="#777777" />
        </svg>
      </Slot>
      <Slot className="w-[19px]">
        <span className="h-[2px] w-[8px] bg-[#666666]" />
      </Slot>
      <div className="relative flex h-full w-[120px] items-center">
        <span className="h-px w-full bg-[#999999]" />
        <span className="absolute left-[58px] h-[14px] w-[5px] bg-[#555555]" />
      </div>
      <Slot className="w-[22px]">
        <svg width="10" height="10" viewBox="0 0 10 10" fill="none">
          <path d="M0 5h10M5 0v10" stroke="#666666" strokeWidth="2" />
        </svg>
      </Slot>
      <div className="w-[58px] text-center">100%</div>
    </div>
  );
}

export default function App() {
  return (
    <div className="flex h-[728px] w-[973px] flex-col overflow-hidden bg-[#20633a] font-['Open_Sans',sans-serif]">
      <TitleBar />
      <TabBar />
      <Ribbon />
      <FormulaBar />
      <Sheet />
      <SheetTabs />
      <StatusBar />
    </div>
  );
}
